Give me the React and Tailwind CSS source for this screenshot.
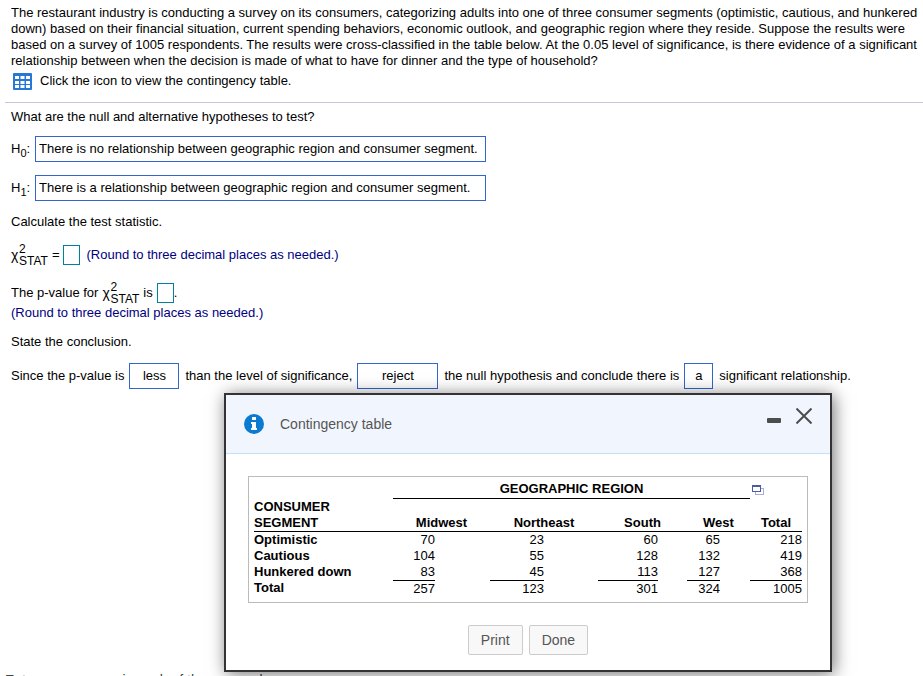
import { useState } from "react";

const segments = [
  { label: "Optimistic", values: [70, 23, 60, 65], total: 218 },
  { label: "Cautious", values: [104, 55, 128, 132], total: 419 },
  { label: "Hunkered down", values: [83, 45, 113, 127], total: 368 },
];
const columnTotals = [257, 123, 301, 324];
const regions = ["Midwest", "Northeast", "South", "West"];

const TableIcon = () => (
  <svg width="19" height="17" viewBox="0 0 19 17" aria-hidden="true">
    <rect width="19" height="17" rx="1" fill="#2678d4" />
    {[3, 8, 12].map((y) =>
      [2, 7.5, 13].map((x) => (
        <rect key={`${x}-${y}`} x={x} y={y} width="4" height="3" fill="#fff" />
      ))
    )}
  </svg>
);

const InfoIcon = () => (
  <svg width="20" height="20" viewBox="0 0 20 20" aria-hidden="true">
    <circle cx="10" cy="10" r="10" fill="#0a7bd1" />
    <rect x="8" y="3" width="4" height="3" fill="#fff" />
    <path d="M7 8h5v6h1v2H7v-2h1v-4H7z" fill="#fff" />
  </svg>
);

const PopoutIcon = () => (
  <svg width="12" height="10" viewBox="0 0 12 10" shapeRendering="crispEdges" aria-hidden="true">
    <path d="M9 3.5h2.5v6h-8V7" fill="none" stroke="#a9add8" />
    <rect x="0.5" y="0.5" width="8" height="6" fill="#fff" stroke="#4a5aa8" />
    <rect width="9" height="2" fill="#4a5aa8" />
  </svg>
);

const ChiStat = () => (
  <span className="inline-flex items-center">
    <span className="w-2 text-sm leading-4">χ</span>
    <span className="flex flex-col text-xs leading-3">
      <span>2</span>
      <span>STAT</span>
    </span>
  </span>
);

const Hypothesis = ({ index, label, text }) => (
  <div className="flex items-center">
    <span className="w-6">
      H<sub className="-bottom-1 text-[11px]">{index}</sub>:
    </span>
    <Choice label={label} options={[text]} className="w-[451px] px-[3px]" />
  </div>
);

const Choice = ({ label, options, className }) => (
  <select
    aria-label={label}
    className={`h-[26px] appearance-none border border-[#3366cc] bg-white text-black ${className}`}
  >
    {options.map((option) => (
      <option key={option}>{option}</option>
    ))}
  </select>
);

const AnswerBox = ({ label }) => (
  <input type="text" aria-label={label} className="h-5 w-[17px] border border-[#007f9f] bg-white" />
);

const ContingencyTable = () => (
  <table className="w-full table-fixed border-collapse text-[13px] leading-4 text-black">
    <colgroup>
      <col className="w-[139px]" />
      <col className="w-[42px]" />
      <col className="w-[55px]" />
      <col className="w-[54px]" />
      <col className="w-[54px]" />
      <col className="w-[60px]" />
      <col className="w-[29px]" />
      <col className="w-[33px]" />
      <col className="w-[30px]" />
      <col className="w-[52px]" />
    </colgroup>
    <thead>
      <tr>
        <td />
        <th colSpan={8} className="border-b border-black pb-px font-bold">
          GEOGRAPHIC REGION
        </th>
        <td>
          <button aria-label="Open table in a new window" className="ml-0.5 block">
            <PopoutIcon />
          </button>
        </td>
      </tr>
      <tr className="border-b border-black align-bottom">
        <th className="text-left font-bold">
          CONSUMER
          <br />
          SEGMENT
        </th>
        {regions.map((region) => (
          <th key={region} colSpan={2} className="font-bold">
            {region}
          </th>
        ))}
        <th className="font-bold">Total</th>
      </tr>
    </thead>
    <tbody>
      {segments.map((row, i) => {
        const line = i === segments.length - 1 ? "border-b border-black" : "";
        return (
          <tr key={row.label}>
            <th className="text-left font-bold">{row.label}</th>
            {row.values.map((value, j) => [
              <td key={`v${j}`} className={`text-right ${line}`}>
                {value}
              </td>,
              <td key={`s${j}`} />,
            ])}
            <td className={`text-right ${line}`}>{row.total}</td>
          </tr>
        );
      })}
      <tr>
        <th className="text-left font-bold">Total</th>
        {columnTotals.map((value, j) => [
          <td key={`v${j}`} className="text-right">
            {value}
          </td>,
          <td key={`s${j}`} />,
        ])}
        <td className="text-right">1005</td>
      </tr>
    </tbody>
  </table>
);

const ContingencyDialog = ({ onClose }) => (
  <div
    role="dialog"
    aria-labelledby="dialog-title"
    className="absolute top-[393px] left-[224px] w-[608px] border-2 border-[#333] bg-white shadow-[2px_2px_16px_rgba(0,0,0,0.55)]"
  >
    <div className="flex h-[59px] items-center border-b border-[#c5dff5] bg-[#f1f6fe] px-[18px]">
      <InfoIcon />
      <h2 id="dialog-title" className="ml-4 flex-1 text-sm text-[#555]">
        Contingency table
      </h2>
      <div className="mb-4 flex items-center gap-[15px]">
        <button aria-label="Minimize" className="flex h-4 w-3.5 items-end pb-px">
          <span className="h-[5px] w-full rounded-[1px] bg-[#4d4d4d]" />
        </button>
        <button aria-label="Close" onClick={onClose}>
          <svg width="16" height="16" viewBox="0 0 16 16" stroke="#4d4d4d" strokeWidth="2">
            <path d="M0.5 0.5l15 15M15.5 0.5l-15 15" />
          </svg>
        </button>
      </div>
    </div>
    <div className="px-[22px] pt-[22px] pb-[15px]">
      <div className="border border-[#bbb] px-[5px] pt-1 pb-[5px]">
        <ContingencyTable />
      </div>
      <div className="mt-[22px] flex justify-center gap-1.5 text-sm text-[#555]">
        <button className="h-[30px] rounded-[2px] border border-[#ccc] bg-[#f8f8f8] px-3">Print</button>
        <button className="h-[30px] rounded-[2px] border border-[#ccc] bg-[#f8f8f8] px-3" onClick={onClose}>
          Done
        </button>
      </div>
    </div>
  </div>
);

const App = () => {
  const [dialogOpen, setDialogOpen] = useState(true);

  return (
    <div className="relative h-screen overflow-hidden bg-white font-['Liberation_Sans',Arial,sans-serif] text-[13px] leading-4 text-black">
      <main className="pt-[5px] pl-[11px]">
        <p>
          The restaurant industry is conducting a survey on its consumers, categorizing adults into one of three
          consumer segments (optimistic, cautious, and hunkered down) based on their financial situation, current
          spending behaviors, economic outlook, and geographic region where they reside. Suppose the results were
          based on a survey of 1005 respondents. The results were cross-classified in the table below. At the 0.05
          level of significance, is there evidence of a significant relationship between when the decision is made of
          what to have for dinner and the type of household?
        </p>
        <button className="mt-1 flex items-start gap-2 pl-0.5" onClick={() => setDialogOpen(true)}>
          <TableIcon />
          <span>Click the icon to view the contingency table.</span>
        </button>
        <hr className="mt-3 -ml-1.5 border-[#c5cad8]" />

        <p className="mt-1.5">What are the null and alternative hypotheses to test?</p>
        <div className="mt-[11px] flex flex-col gap-[13px]">
          <Hypothesis
            index={0}
            label="Null hypothesis"
            text="There is no relationship between geographic region and consumer segment."
          />
          <Hypothesis
            index={1}
            label="Alternative hypothesis"
            text="There is a relationship between geographic region and consumer segment."
          />
        </div>

        <p className="mt-[13px]">Calculate the test statistic.</p>
        <div className="mt-[13px] flex items-center">
          <ChiStat />
          <span className="mx-1">=</span>
          <AnswerBox label="Chi-square test statistic" />
          <span className="ml-1.5 text-[#000080]">(Round to three decimal places as needed.)</span>
        </div>
        <div className="mt-3.5 flex items-center">
          <span className="mr-1">The p-value for</span>
          <ChiStat />
          <span className="mx-1">is</span>
          <AnswerBox label="p-value" />
          <span>.</span>
        </div>
        <p className="text-[#000080]">(Round to three decimal places as needed.)</p>

        <p className="mt-[13px]">State the conclusion.</p>
        <div className="mt-[13px] flex items-center whitespace-nowrap">
          <span>Since the p-value is</span>
          <Choice label="Comparison" options={["less", "greater"]} className="mr-1.5 ml-[5px] w-[50px] text-center" />
          <span>than the level of significance,</span>
          <Choice label="Decision" options={["reject", "do not reject"]} className="mr-1.5 ml-[5px] w-[81px] text-center" />
          <span>the null hypothesis and conclude there is</span>
          <Choice label="Evidence" options={["a", "no"]} className="mr-1.5 ml-[5px] w-[29px] text-center" />
          <span>significant relationship.</span>
        </div>
      </main>
      <p className="mt-[283px] pl-[5px] text-sm leading-4 text-[#444]">Enter your answer in each of the answer boxes.</p>

      {dialogOpen && <ContingencyDialog onClose={() => setDialogOpen(false)} />}
    </div>
  );
};

export default App;
